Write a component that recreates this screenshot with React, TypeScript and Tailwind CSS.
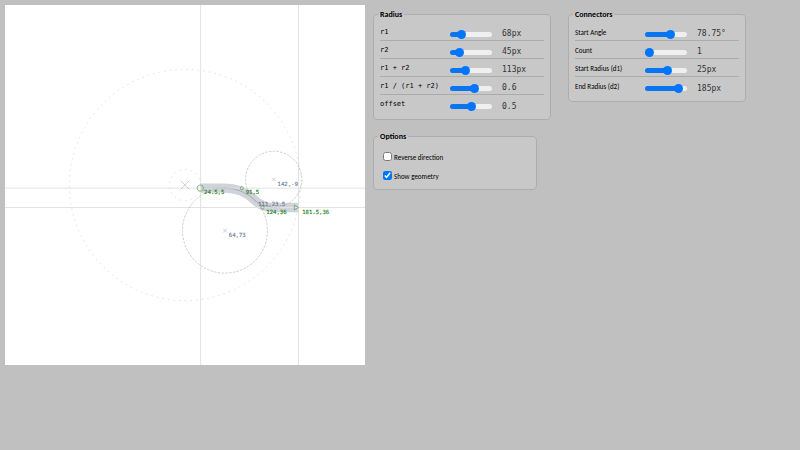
import { useId, useState } from 'react';
import type { ReactNode } from 'react';

type Point = { x: number; y: number };

type SliderConfig = {
  label: string;
  min: number;
  max: number;
  value: number;
  unit?: string;
};

const radiusSliders: SliderConfig[] = [
  { label: 'r1', min: 0, max: 300, value: 68, unit: 'px' },
  { label: 'r2', min: 0, max: 300, value: 45, unit: 'px' },
  { label: 'r1 + r2', min: 0, max: 325, value: 113, unit: 'px' },
  { label: 'r1 / (r1 + r2)', min: 0, max: 1, value: 0.6 },
  { label: 'offset', min: 0, max: 1, value: 0.5 },
];

const connectorSliders: SliderConfig[] = [
  { label: 'Start Angle', min: -90, max: 180, value: 78.75, unit: '°' },
  { label: 'Count', min: 1, max: 20, value: 1 },
  { label: 'Start Radius (d1)', min: 0, max: 45, value: 25, unit: 'px' },
  { label: 'End Radius (d2)', min: 0, max: 210, value: 185, unit: 'px' },
];

const THUMB = 9;
const TRACK = 42;

function SliderRow({ config, mono }: { config: SliderConfig; mono?: boolean }) {
  const id = useId();
  const [value, setValue] = useState(config.value);
  const ratio = (value - config.min) / (config.max - config.min);
  const fill = THUMB / 2 + ratio * (TRACK - THUMB);

  return (
    <div className="flex h-[18px] items-center border-b border-[#ababab] pt-[5px] last:border-b-0">
      <label
        htmlFor={id}
        className={`w-[70px] shrink-0 pb-[4px] text-[7px] leading-[9px] text-black ${
          mono ? 'font-["DejaVu_Sans_Mono",monospace]' : 'font-[Carlito,Lato,sans-serif]'
        }`}
      >
        {config.label}
      </label>
      <input
        id={id}
        type="range"
        min={config.min}
        max={config.max}
        step="any"
        value={value}
        onChange={(e) => setValue(Number(e.target.value))}
        style={{ backgroundImage: `linear-gradient(to right, #0a75f0 ${fill}px, #efefef ${fill}px)` }}
        className="h-[5px] w-[42px] shrink-0 appearance-none rounded-full [&::-webkit-slider-thumb]:size-[9px] [&::-webkit-slider-thumb]:appearance-none [&::-webkit-slider-thumb]:rounded-full [&::-webkit-slider-thumb]:bg-[#0075ff]"
      />
      <output
        htmlFor={id}
        className='ml-[10px] font-["DejaVu_Sans_Mono",monospace] text-[8px] leading-[10px] text-[#333]'
      >
        {Number(value.toFixed(2))}
        {config.unit}
      </output>
    </div>
  );
}

function Panel({ title, className, children }: { title: string; className: string; children: ReactNode }) {
  return (
    <fieldset className={`min-w-0 rounded border border-[#adadad] bg-[#c8c8c8] px-[6px] pb-[6px] ${className}`}>
      <legend className="-ml-[2px] px-[2px] text-[8px] leading-[10px] font-bold text-black">{title}</legend>
      {children}
    </fieldset>
  );
}

function Cross({ x, y, size, color }: Point & { size: number; color: string }) {
  return (
    <path
      d={`M${x - size},${y - size} l${size * 2},${size * 2} m0,${-size * 2} l${-size * 2},${size * 2}`}
      stroke={color}
      fill="none"
    />
  );
}

function PointLabel({ x, y, color }: Point & { color: string }) {
  return (
    <text x={x + 6} y={y + 10} fill={color} stroke={color} strokeWidth="0.2" fontSize="9">
      {`${x},${y}`}
    </text>
  );
}

function Geometry() {
  return (
    <g>
      <g stroke="#e2e2e2" strokeWidth="1.6">
        <path d="M25,-288 V288 M181.5,-288 V288" />
        <path d="M-288,5 H288 M-288,36 H288" />
      </g>

      {/* Start and end radius around the origin */}
      <g fill="none" stroke="#d6d6d6" strokeWidth="1" strokeDasharray="3 6">
        <circle r="25" />
        <circle r="185" />
      </g>
      <Cross x={0} y={0} size={7} color="#b4b4b4" />

      {/* Circles that the two arcs lie on */}
      <g fill="none" stroke="#b4b4bc" strokeWidth="1" strokeDasharray="4 2">
        <circle cx="64" cy="73" r="68" />
        <circle cx="142" cy="-9" r="45" />
      </g>
      <Cross x={64} y={73} size={3} color="#a8b0c2" />
      <Cross x={142} y={-9} size={3} color="#a8b0c2" />

      <g fill="none" stroke="#4a9a4a" strokeWidth="1">
        <circle cx="24.5" cy="5" r="5" />
        <circle cx="91" cy="5" r="2.5" />
        <circle cx="124" cy="36" r="2.5" />
        <path d="M175,32 L181.5,36 L175,40 Z" />
      </g>

      <PointLabel x={64} y={73} color="#667596" />
      <PointLabel x={142} y={-9} color="#667596" />
      <PointLabel x={111} y={23.5} color="#667596" />
      <PointLabel x={24.5} y={5} color="#108010" />
      <PointLabel x={91} y={5} color="#108010" />
      <PointLabel x={124} y={36} color="#108010" />
      <PointLabel x={181.5} y={36} color="#108010" />
    </g>
  );
}

function App() {
  const [reverse, setReverse] = useState(false);
  const [showGeometry, setShowGeometry] = useState(true);
  const connector = 'M24.5,5 H64 A68,68 0 0 1 111,23.8 A45,45 0 0 0 142,36 H181.5';

  return (
    <main className="flex min-h-screen items-start gap-2 bg-[#c0c0c0] p-[5px] font-[Carlito,Lato,sans-serif]">
      <svg
        viewBox="-288 -288 576 576"
        className='aspect-square w-[45vw] shrink-0 bg-white font-["DejaVu_Sans_Mono",monospace]'
      >
        <g transform={reverse ? 'scale(-1 1)' : undefined}>
          <path d={connector} fill="none" stroke="#d0d3da" strokeWidth="15" />
          <path d={connector} fill="none" stroke="#8d96a8" strokeWidth="1" />
        </g>
        {showGeometry && <Geometry />}
      </svg>

      <div className="flex flex-col gap-[11px] pt-1">
        <div className="flex flex-wrap items-start gap-[17px]">
          <Panel title="Radius" className="w-[178px]">
            <div className="pt-[4px]">
              {radiusSliders.map((slider) => (
                <SliderRow key={slider.label} config={slider} mono />
              ))}
            </div>
          </Panel>

          <Panel title="Connectors" className="w-[178px]">
            <div className="pt-[4px]">
              {connectorSliders.map((slider) => (
                <SliderRow key={slider.label} config={slider} />
              ))}
            </div>
          </Panel>
        </div>

        <Panel title="Options" className="w-[164px]">
          <div className="flex flex-col gap-[8px] px-[3px] pt-[11px] pb-[1px] text-[7px] leading-[10px]">
            <label className="flex items-start gap-[2px]">
              <input
                type="checkbox"
                checked={reverse}
                onChange={(e) => setReverse(e.target.checked)}
                className="size-[9px] accent-[#0075ff]"
              />
              <span className="pt-[1px]">Reverse direction</span>
            </label>
            <label className="flex items-start gap-[2px]">
              <input
                type="checkbox"
                checked={showGeometry}
                onChange={(e) => setShowGeometry(e.target.checked)}
                className="size-[9px] accent-[#0075ff]"
              />
              <span className="pt-[1px]">Show geometry</span>
            </label>
          </div>
        </Panel>
      </div>
    </main>
  );
}

export default App;
